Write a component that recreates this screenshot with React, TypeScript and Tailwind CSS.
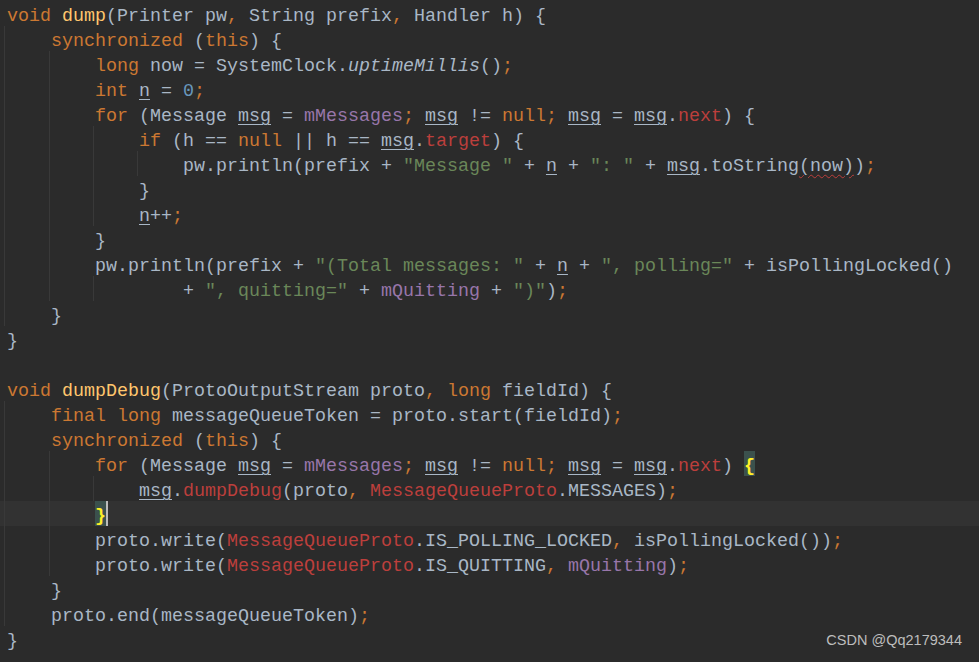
import React from "react";

type Seg = [string, string];

const tone: Record<string, string> = {
  p: "text-[#a9b7c6]",
  k: "text-[#cc7832]",
  s: "text-[#6a8759]",
  n: "text-[#6897bb]",
  f: "text-[#9876aa]",
  m: "text-[#ffc66d]",
  i: "text-[#a9b7c6] italic",
  e: "text-[#bc3f3c]",
  u: "text-[#a9b7c6] underline decoration-[#a9b7c6] decoration-1 underline-offset-[3px]",
  w: "text-[#a9b7c6] underline decoration-wavy decoration-[#bc3f3c] decoration-1 underline-offset-[3px]",
};

const lines: Seg[][] = [
  [["k", "void "], ["m", "dump"], ["p", "(Printer pw"], ["k", ","], ["p", " String prefix"], ["k", ","], ["p", " Handler h) {"]],
  [["p", "    "], ["k", "synchronized "], ["p", "("], ["k", "this"], ["p", ") {"]],
  [["p", "        "], ["k", "long "], ["p", "now = SystemClock."], ["i", "uptimeMillis"], ["p", "()"], ["k", ";"]],
  [["p", "        "], ["k", "int "], ["u", "n"], ["p", " = "], ["n", "0"], ["k", ";"]],
  [["p", "        "], ["k", "for "], ["p", "(Message "], ["u", "msg"], ["p", " = "], ["f", "mMessages"], ["k", "; "], ["u", "msg"], ["p", " != "], ["k", "null; "], ["u", "msg"], ["p", " = "], ["u", "msg"], ["p", "."], ["e", "next"], ["p", ") {"]],
  [["p", "            "], ["k", "if "], ["p", "(h == "], ["k", "null "], ["p", "|| h == "], ["u", "msg"], ["p", "."], ["e", "target"], ["p", ") {"]],
  [["p", "                pw.println(prefix + "], ["s", "\"Message \""], ["p", " + "], ["u", "n"], ["p", " + "], ["s", "\": \""], ["p", " + "], ["u", "msg"], ["p", ".toString"], ["w", "(now)"], ["p", ")"], ["k", ";"]],
  [["p", "            }"]],
  [["p", "            "], ["u", "n"], ["p", "++"], ["k", ";"]],
  [["p", "        }"]],
  [["p", "        pw.println(prefix + "], ["s", "\"(Total messages: \""], ["p", " + "], ["u", "n"], ["p", " + "], ["s", "\", polling=\""], ["p", " + isPollingLocked()"]],
  [["p", "                + "], ["s", "\", quitting=\""], ["p", " + "], ["f", "mQuitting"], ["p", " + "], ["s", "\")\""], ["p", ")"], ["k", ";"]],
  [["p", "    }"]],
  [["p", "}"]],
  [],
  [["k", "void "], ["m", "dumpDebug"], ["p", "(ProtoOutputStream proto"], ["k", ", long "], ["p", "fieldId) {"]],
  [["p", "    "], ["k", "final long "], ["p", "messageQueueToken = proto.start(fieldId)"], ["k", ";"]],
  [["p", "    "], ["k", "synchronized "], ["p", "("], ["k", "this"], ["p", ") {"]],
  [["p", "        "], ["k", "for "], ["p", "(Message "], ["u", "msg"], ["p", " = "], ["f", "mMessages"], ["k", "; "], ["u", "msg"], ["p", " != "], ["k", "null; "], ["u", "msg"], ["p", " = "], ["u", "msg"], ["p", "."], ["e", "next"], ["p", ") "], ["b", "{"]],
  [["p", "            "], ["u", "msg"], ["p", "."], ["e", "dumpDebug"], ["p", "(proto"], ["k", ", "], ["e", "MessageQueueProto"], ["p", ".MESSAGES)"], ["k", ";"]],
  [["p", "        "], ["b", "}"]],
  [["p", "        proto.write("], ["e", "MessageQueueProto"], ["p", ".IS_POLLING_LOCKED"], ["k", ", "], ["p", "isPollingLocked())"], ["k", ";"]],
  [["p", "        proto.write("], ["e", "MessageQueueProto"], ["p", ".IS_QUITTING"], ["k", ", "], ["f", "mQuitting"], ["p", ")"], ["k", ";"]],
  [["p", "    }"]],
  [["p", "    proto.end(messageQueueToken)"], ["k", ";"]],
  [["p", "}"]],
];

// indent guides: x position, first line, last line
const guides = [
  { x: 4, from: 1, to: 12 },
  { x: 49, from: 2, to: 11 },
  { x: 93, from: 5, to: 8 },
  { x: 137, from: 6, to: 6 },
  { x: 93, from: 11, to: 11 },
  { x: 4, from: 16, to: 24 },
  { x: 49, from: 18, to: 22 },
  { x: 93, from: 19, to: 19 },
];

const caretLine = 20;

export default function App() {
  return (
    <div className="relative w-[979px] h-[662px] overflow-hidden bg-[#2b2b2b]">
      <div className="pt-[1px] font-[family-name:Liberation_Mono,Courier_New,monospace] text-[18.33px]">
        {lines.map((segs, index) => (
          <div
            key={`line-${index}`}
            className={`flex h-[25px] leading-[25px] pl-[7px] whitespace-pre ${index === caretLine ? "bg-[#323232]" : ""}`}
          >
            {segs.map(([kind, text], j) =>
              kind === "b" ? (
                <span key={`seg-${index}-${j}`} className="h-[25px] bg-[#3b514d]">
                  <span className="relative top-[3px] text-[#ffef28] font-bold">{text}</span>
                </span>
              ) : (
                <span key={`seg-${index}-${j}`} className={`relative top-[3px] ${tone[kind]}`}>
                  {text}
                </span>
              )
            )}
            {index === caretLine && <span className="w-[2px] h-[25px] bg-[#bbbbbb]" />}
          </div>
        ))}
      </div>

      {guides.map((g, index) => (
        <div
          key={`guide-${index}`}
          className="absolute w-[1px] bg-[#393939]"
          style={{ left: g.x, top: 1 + g.from * 25, height: (g.to - g.from + 1) * 25 }}
        />
      ))}

      <div className="absolute right-[17px] bottom-[10px] font-[family-name:Liberation_Sans,Arial,sans-serif] text-[14.5px] text-[#bdbdbd]">
        CSDN @Qq2179344
      </div>
    </div>
  );
}
